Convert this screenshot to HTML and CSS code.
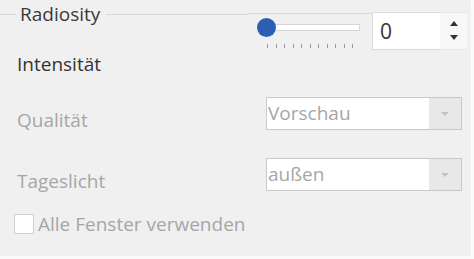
FILE: index.html
```html
<!DOCTYPE html>
<html lang="de">
<head>
    <meta charset="UTF-8">
    <title>Radiosity</title>
    <link rel="stylesheet" href="styles.css">
</head>
<body>
    <div class="panel">
        <div class="top">
            <div class="left">
                <div class="legend">Radiosity</div>
                <div class="label strong">Intensität</div>
            </div>
            <div class="slider-wrap">
                <div class="slider">
                    <div class="track"></div>
                    <div class="thumb"></div>
                </div>
                <div class="ticks">
                    <span></span><span></span><span></span><span></span>
                    <span></span><span></span><span></span><span></span>
                    <span></span><span></span><span></span>
                </div>
            </div>
            <div class="spin">
                <div class="spin-value">0</div>
                <div class="spin-buttons">
                    <span class="arrow-up"></span>
                    <span class="arrow-down"></span>
                </div>
            </div>
        </div>

        <div class="row row-quality">
            <div class="label">Qualität</div>
            <div class="combo">
                <div class="combo-text">Vorschau</div>
                <div class="combo-button"><span></span></div>
            </div>
        </div>

        <div class="row row-light">
            <div class="label">Tageslicht</div>
            <div class="combo">
                <div class="combo-text">außen</div>
                <div class="combo-button"><span></span></div>
            </div>
        </div>

        <div class="check">
            <div class="box"></div>
            <div class="check-label">Alle Fenster verwenden</div>
        </div>
    </div>
</body>
</html>
```

FILE: styles.css
```css
body {
    margin: 0;
    background-color: #fafafa;
    font-family: 'Open Sans', 'Noto Sans', sans-serif;
}

.panel {
    width: 471px;
    height: 256px;
    background-color: #f0f0f0;
    overflow: hidden;
}

.top {
    display: flex;
    height: 97px;
}

.left {
    width: 249px;
}

.legend {
    display: flex;
    align-items: center;
    height: 28px;
    font-size: 19px;
    line-height: 28px;
    color: #3a3a3a;
}

.legend::before,
.legend::after {
    content: "";
    height: 1px;
    background-color: #d9d9d9;
}

.legend::before {
    width: 16px;
    margin-right: 4px;
}

.legend::after {
    flex: 1;
    margin-left: 6px;
}

.label {
    padding-left: 17px;
    font-size: 19px;
    line-height: 28px;
    color: #a6a6a6;
}

.label.strong {
    margin-top: 22px;
    color: #333;
}

.slider-wrap {
    flex: 1;
    margin-top: 13px;
    height: 40px;
    border-top: 1px solid #d9d9d9;
    padding: 4px 12px 0 8px;
}

.slider {
    position: relative;
    height: 19px;
    padding-top: 6px;
    box-sizing: border-box;
}

.track {
    margin-left: 10px;
    height: 5px;
    background-color: #fff;
    border: 1px solid #d6d6d6;
}

.thumb {
    position: absolute;
    left: 0;
    top: 0;
    width: 19px;
    height: 19px;
    border-radius: 50%;
    background-color: #2c5eb4;
}

.ticks {
    display: flex;
    justify-content: space-between;
    margin: 7px 7px 0 10px;
}

.ticks span {
    width: 1px;
    height: 4px;
    background-color: #9a9a9a;
}

.spin {
    display: flex;
    margin-top: 12px;
    margin-right: 4px;
    height: 38px;
}

.spin-value {
    width: 60px;
    padding-left: 7px;
    background-color: #fff;
    border: 1px solid #dadada;
    border-right: 0;
    font-size: 21px;
    line-height: 36px;
    color: #333;
}

.spin-buttons {
    width: 27px;
    background-color: #f8f8f8;
    border-top: 1px solid #e6e6e6;
    border-bottom: 1px solid #e6e6e6;
    display: flex;
    flex-direction: column;
    align-items: center;
    justify-content: space-between;
    padding: 8px 0 9px;
    box-sizing: border-box;
}

.arrow-up {
    border-left: 4px solid transparent;
    border-right: 4px solid transparent;
    border-bottom: 5px solid #333;
}

.arrow-down {
    border-left: 4px solid transparent;
    border-right: 4px solid transparent;
    border-top: 5px solid #333;
}

.row {
    display: flex;
    height: 61px;
}

.row-light {
    height: 53px;
}

.row .label {
    width: 249px;
    padding-top: 9px;
}

.combo {
    display: flex;
    width: 196px;
    height: 33px;
    box-sizing: border-box;
    background-color: #fff;
    border: 1px solid #c9c9c9;
}

.combo-text {
    flex: 1;
    padding-left: 1px;
    font-size: 19px;
    line-height: 30px;
    color: #a6a6a6;
}

.combo-button {
    width: 32px;
    background-color: #e8e8e8;
    display: flex;
    align-items: center;
    justify-content: center;
}

.combo-button span {
    border-left: 4px solid transparent;
    border-right: 4px solid transparent;
    border-top: 4px solid #c2c2c2;
}

.check {
    display: flex;
    align-items: center;
    padding-left: 14px;
}

.box {
    width: 18px;
    height: 18px;
    background-color: #fff;
    border: 1px solid #cfcfcf;
}

.check-label {
    margin-left: 4px;
    font-size: 19px;
    line-height: 26px;
    color: #a6a6a6;
}
```
